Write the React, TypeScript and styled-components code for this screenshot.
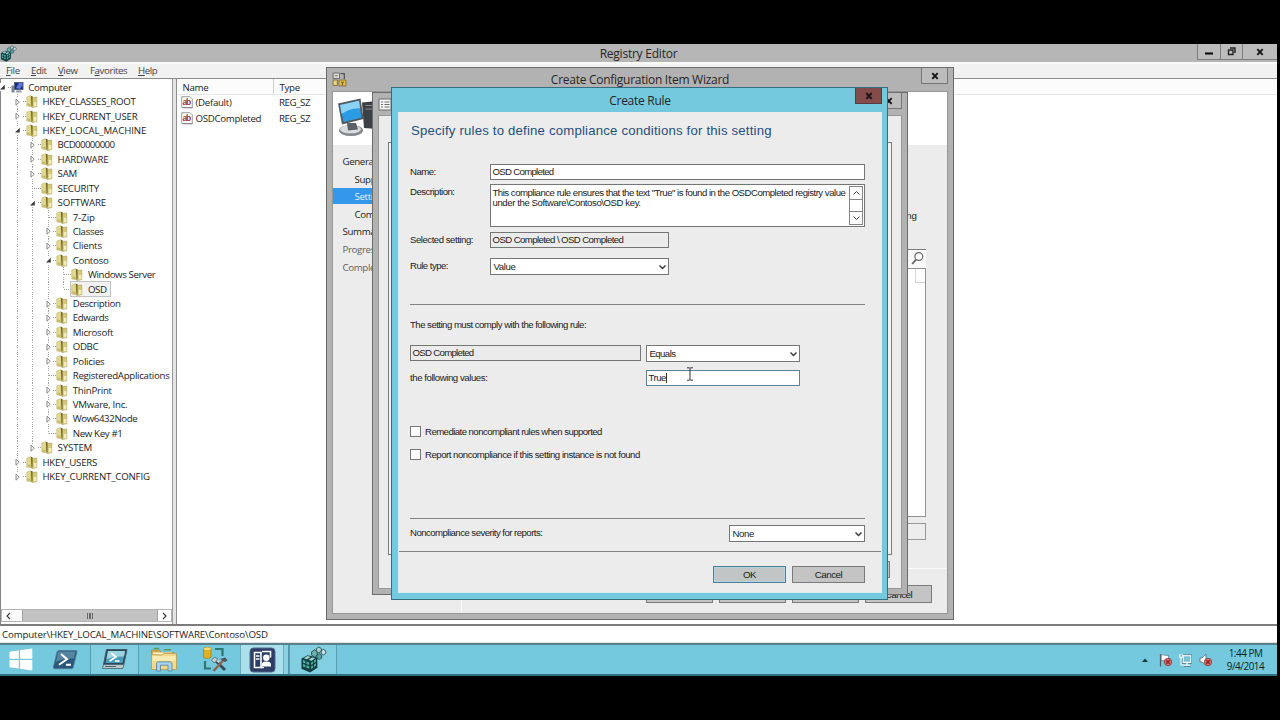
import React from "react";
import styled, { createGlobalStyle, css } from "styled-components";

const Global = createGlobalStyle`
  *, *::before, *::after { box-sizing: border-box; }
  html, body { margin: 0; padding: 0; background: #000; }
  body { font-family: "Open Sans", "Noto Sans", sans-serif; font-size: 9.7px; color: #1c1c1c; }
`;

/* ---------- shared ---------- */
const Label = styled.span<{ $ls?: number }>`
  letter-spacing: ${(p) => p.$ls ?? -0.35}px;
  white-space: nowrap;
`;

const Screen = styled.div`
  width: 1280px;
  height: 720px;
  padding: 44px 3px 44px 0;
  background: #000;
  overflow: hidden;
  position: relative;
  display: flex;
  flex-direction: column;
`;

/* ---------- registry editor ---------- */
const Editor = styled.div`
  flex: 1;
  min-height: 0;
  display: flex;
  flex-direction: column;
  background: #f1f1f1;
`;

const TitleBar = styled.div`
  height: 18px;
  display: grid;
  grid-template-columns: 80px 1fr 80px;
  align-items: center;
  background: #b6b6b6;
`;

const TitleText = styled.div`
  font-size: 12px;
  line-height: 18px;
  padding-top: 1px;
  text-align: center;
  letter-spacing: -0.23px;
  color: #262626;
`;

const WindowControls = styled.div`
  display: flex;
  align-self: start;
  height: 16px;
`;

const Control = styled.div<{ $w: number }>`
  width: ${(p) => p.$w}px;
  height: 16px;
  display: flex;
  align-items: center;
  justify-content: center;
  border: solid #7d7d7d;
  border-width: 0 0 1px 1px;
  background: #bcbcbc;
`;

const MenuBar = styled.div`
  height: 17px;
  padding: 0 0 0 6px;
  display: flex;
  border-top: 2px solid #fafafa;
  border-bottom: 1px solid #8b8b8b;
  background: #f2f2f2;
  color: #444;
`;

const MenuItem = styled.div<{ $w: number }>`
  width: ${(p) => p.$w}px;
  line-height: 14px;
  letter-spacing: -0.42px;
`;

const Mnemonic = styled.u``;

const Panes = styled.div`
  flex: 1;
  min-height: 0;
  display: flex;
  background: #e4e4e4;
`;

const TreePane = styled.div`
  width: 173px;
  border-left: 1px solid #858585;
  border-right: 1px solid #9a9a9a;
  background: #fff;
  display: flex;
  flex-direction: column;
  justify-content: space-between;
`;

const TreeList = styled.div`
  padding-top: 1px;
`;

const TreeRow = styled.div`
  height: 14.43px;
  margin-left: -6px;
  display: flex;
  align-items: center;
`;

const Guide = styled.div<{ $line?: boolean; $end?: boolean }>`
  width: 15.2px;
  height: 100%;
  flex: none;
  display: flex;
  align-items: center;
  justify-content: center;
  ${(p) =>
    p.$line &&
    css`
      background: repeating-linear-gradient(#a6a6a6 0 1px, transparent 1px 2.4px) top center / 1px ${p.$end ? "50%" : "100%"} no-repeat;
    `}
`;

const Twist = styled.svg`
  width: 7px;
  height: 8px;
  background: #fff;
`;

const Elbow = styled.div<{ $w: number }>`
  width: ${(p) => p.$w}px;
  margin-left: ${(p) => 0.5 - p.$w}px;
  flex: none;
  border-top: 1px dotted #999;
`;

const Node = styled.div<{ $sel?: boolean }>`
  height: 14px;
  display: flex;
  align-items: center;
  gap: 4.5px;
  padding-right: 3px;
  ${(p) => p.$sel && "box-shadow: 0 0 0 1px #c2c2c2; background: #f2f2f2;"}
`;

const HScroll = styled.div`
  height: 13px;
  margin: 0 0 2px 0;
  display: flex;
  border: 1px solid #b5b5b5;
  background: #fafafa;
`;

const ScrollEnd = styled.div`
  width: 13px;
  display: flex;
  align-items: center;
  justify-content: center;
  background: #fff;
`;

const ScrollThumb = styled.div`
  flex: 1;
  margin-left: 7px;
  border: solid #a2a2a2;
  border-width: 0 1px;
  background: #c3c3c3;
  display: flex;
  align-items: center;
  justify-content: center;
  gap: 1px;
`;

const Grip = styled.i`
  width: 1.4px;
  height: 6px;
  background: #666;
`;

const ListPane = styled.div`
  flex: 1;
  margin-left: 3px;
  border-left: 1px solid #8f8f8f;
  background: #fff;
`;

const ListHead = styled.div`
  height: 16px;
  display: flex;
  border-bottom: 1px solid #e6e6e6;
  background: #fcfcfc;
`;

const HeadCell = styled.div<{ $w?: number }>`
  ${(p) => (p.$w ? `width: ${p.$w}px; border-right: 1px solid #cfcfcf;` : "flex: 1;")}
  padding-left: 5.5px;
  line-height: 18px;
  letter-spacing: -0.3px;
`;

const ListRow = styled.div`
  height: 15.4px;
  padding-left: 4px;
  display: flex;
  align-items: center;
  gap: 2.5px;
`;

const NameCell = styled.div`
  width: 81px;
  height: 15px;
  line-height: 15px;
`;

const StatusBar = styled.div`
  height: 19px;
  padding-left: 2px;
  border-top: 2px solid #7c7c7c;
  border-bottom: 1px solid #e0e0e0;
  background: #fff;
  line-height: 17px;
`;

/* ---------- taskbar ---------- */
const Taskbar = styled.div`
  height: 33px;
  display: flex;
  align-items: stretch;
  border-top: 2px solid #57808a;
  border-bottom: 2px solid #306f80;
  background: #75c9de;
`;

const TaskButton = styled.div<{ $w: number; $tone?: "open" | "active" }>`
  width: ${(p) => p.$w}px;
  display: flex;
  align-items: center;
  justify-content: center;
  ${(p) => p.$tone === "open" && "background: #82cfe1; border: solid #5a9fb1; border-width: 0 1px;"}
  ${(p) => p.$tone === "active" && "background: #aadfec; border: solid #6bacbd; border-width: 0 1px;"}
`;

const GroupEdge = styled.div`
  width: 5px;
  border-right: 1px solid #4e97aa;
  background: #8bd2e3;
`;

const Tray = styled.div`
  margin-left: auto;
  padding-right: 12px;
  display: flex;
  align-items: center;
`;

const TrayIcons = styled.div`
  display: flex;
  align-items: center;
  gap: 7px;
  margin-right: 14.5px;
`;

const TrayArrow = styled.svg`
  margin-right: 3px;
`;

const Clock = styled.div`
  width: 39px;
  text-align: center;
  line-height: 13px;
  letter-spacing: -0.46px;
  color: #0c1d23;
  font-size: 9.9px;
`;

/* ---------- windows ---------- */
const Window = styled.div<{ $x: number; $y: number; $w: number; $h: number; $active?: boolean }>`
  position: absolute;
  left: ${(p) => p.$x}px;
  top: ${(p) => p.$y}px;
  width: ${(p) => p.$w}px;
  height: ${(p) => p.$h}px;
  padding: ${(p) => (p.$active ? "0 5px 6px 6px" : "0 5px 5px")};
  display: flex;
  flex-direction: column;
  border: 1px solid ${(p) => (p.$active ? "#32707f" : "#6c6c6c")};
  background: ${(p) => (p.$active ? "#75c9de" : "#b2b2b2")};
`;

const WindowTitle = styled.div<{ $h: number }>`
  height: ${(p) => p.$h}px;
  display: grid;
  grid-template-columns: 30px 1fr 30px;
  align-items: center;
  flex: none;
  font-size: 12px;
  letter-spacing: -0.27px;
  text-align: center;
  color: #262626;
`;

const CloseBox = styled.div<{ $hot?: boolean }>`
  width: 27px;
  height: 16px;
  align-self: start;
  justify-self: end;
  display: flex;
  align-items: center;
  justify-content: center;
  border: solid ${(p) => (p.$hot ? "#5b3a3c" : "#767676")};
  border-width: 0 1px 1px;
  background: ${(p) => (p.$hot ? "#834b49" : "#bcbcbc")};
`;

const Client = styled.div`
  flex: 1;
  min-height: 0;
  display: flex;
  flex-direction: column;
  overflow: hidden;
  border: 1px solid #979797;
  background: #ececec;
`;

const Banner = styled.div`
  height: 53px;
  padding: 5px 4px;
  background: #fff;
  flex: none;
`;

const WizardBody = styled.div`
  height: 423px;
  display: flex;
  justify-content: space-between;
`;

const NavList = styled.div`
  width: 128px;
  padding-top: 8px;
`;

const NavItem = styled.div<{ $sub?: boolean; $state?: "on" | "later" }>`
  height: 15.6px;
  margin-bottom: 2px;
  padding-left: ${(p) => (p.$sub ? 21.5 : 9.5)}px;
  line-height: 17px;
  letter-spacing: -0.35px;
  white-space: nowrap;
  color: ${(p) => (p.$state === "on" ? "#e4f2ff" : p.$state === "later" ? "#606060" : "#1c1c1c")};
  background: ${(p) => (p.$state === "on" ? "#3597e9" : "transparent")};
`;

const SettingsColumn = styled.div`
  width: 60px;
  margin-right: 21px;
  padding-top: 64px;
  display: flex;
  flex-direction: column;
  text-align: right;
`;

const ColumnCaption = styled.div`
  height: 14px;
  padding-right: 9px;
  font-family: "Liberation Sans", sans-serif;
  line-height: 14px;
`;

const SearchBox = styled.div`
  height: 19px;
  margin-top: 26px;
  padding: 1px 2px;
  border: solid #7a7a7a;
  border-width: 1px 0 0;
  background: #f8f8f8;
`;

const SettingsGrid = styled.div`
  height: 249px;
  border: 1px solid #929292;
  background: #fff;
  &::before {
    content: "";
    display: block;
    height: 14px;
    margin-left: 48px;
    border-left: 1px solid #d6d6d6;
    border-bottom: 1px solid #d0d0d0;
  }
`;

const ColumnField = styled.div`
  height: 17px;
  margin-top: 6px;
  border: 1px solid #979797;
  background: #ededed;
`;

const WizardFooter = styled.div`
  flex: 1;
  margin-left: 128px;
  padding: 16px 15px 0 0;
  display: flex;
  justify-content: flex-end;
  gap: 6px;
  border: solid #fafafa;
  border-width: 1px 0 0 1px;
`;

const PushButton = styled.div<{ $w: number; $primary?: boolean }>`
  width: ${(p) => p.$w}px;
  height: 17px;
  display: flex;
  align-items: center;
  justify-content: center;
  border: 1px solid ${(p) => (p.$primary ? "#4d7f94" : "#7a7a7a")};
  background: ${(p) => (p.$primary ? "#c2c5c6" : "#c4c4c4")};
  ${(p) => p.$primary && "box-shadow: inset 0 0 0 1px #b3d5de;"}
  font-family: "Liberation Sans", sans-serif;
  font-size: 9.8px;
  letter-spacing: -0.5px;
  color: #1a1a1a;
`;

const WizardButton = styled(PushButton)`
  height: 18px;
`;

const TabSheet = styled.div`
  flex: 1;
  margin: 26px 9px 0;
  border: 1px solid #7f7b74;
  background: #f3f3f3;
`;

const SheetFooter = styled.div`
  height: 33px;
  padding: 6px 11px 0;
  display: flex;
  justify-content: flex-end;
`;

/* ---------- create rule dialog ---------- */
const Form = styled(Client)`
  border-color: #d9eef2;
  border-top: 0;
  font-family: "Liberation Sans", sans-serif;
  font-size: 9.6px;
  color: #1a1a1a;
`;

const FormArea = styled.div`
  padding: 0 16px 0 11px;
  display: flex;
  flex-direction: column;
`;

const Heading = styled.div`
  height: 35px;
  padding-left: 1px;
  line-height: 37px;
  font-size: 13.2px;
  letter-spacing: 0.19px;
  white-space: nowrap;
  color: #254f7c;
`;

const FormRow = styled.div<{ $top: number; $h?: number }>`
  height: ${(p) => p.$h ?? 16}px;
  margin-top: ${(p) => p.$top}px;
  display: grid;
  grid-template-columns: 80px 1fr;
  line-height: 16px;
`;

const RuleRow = styled(FormRow)`
  grid-template-columns: 231px 154px;
  column-gap: 5px;
`;

const SeverityRow = styled(FormRow)`
  grid-template-columns: 1fr 136px;
`;

const Input = styled.div<{ $w?: number; $off?: boolean; $focus?: boolean }>`
  ${(p) => p.$w && `width: ${p.$w}px;`}
  height: 16px;
  padding-left: 1.5px;
  line-height: 14.5px;
  display: flex;
  border: 1px solid ${(p) => (p.$focus ? "#5e8196" : "#767676")};
  background: ${(p) => (p.$off ? "#ebebeb" : "#fff")};
`;

const Caret = styled.i`
  width: 1px;
  height: 10px;
  margin: 2px 0 0 0.5px;
  background: #333;
`;

const Select = styled.div<{ $w?: number }>`
  ${(p) => p.$w && `width: ${p.$w}px;`}
  height: 17px;
  padding: 0 1px 0 2.5px;
  display: flex;
  align-items: center;
  justify-content: space-between;
  border: 1px solid #767676;
  background: #fff;
`;

const TextArea = styled.div`
  height: 43px;
  padding: 2px 0 0 1.5px;
  display: flex;
  justify-content: space-between;
  line-height: 10.4px;
  border: 1px solid #767676;
  background: #fff;
`;

const Lines = styled.div`
  padding-top: 1px;
  display: flex;
  flex-direction: column;
`;

const VScroll = styled.div`
  width: 14px;
  height: 39px;
  margin: -1px 1px 0 0;
  display: grid;
  grid-template-rows: 13px 1fr 13px;
  border: 1px solid #868686;
`;

const Step = styled.div`
  display: flex;
  align-items: center;
  justify-content: center;
  &:first-child { border-bottom: 1px solid #868686; }
  &:last-child { border-top: 1px solid #868686; }
`;

const Rule = styled.div<{ $top: number }>`
  height: 1px;
  margin-top: ${(p) => p.$top}px;
  flex: none;
  background: #838383;
`;

const Sentence = styled.div`
  height: 14px;
  margin-top: 13px;
  line-height: 14px;
`;

const CheckRow = styled.div<{ $top: number }>`
  height: 11px;
  margin-top: ${(p) => p.$top}px;
  display: flex;
  align-items: center;
  gap: 4px;
`;

const Box = styled.i`
  width: 11px;
  height: 11px;
  border: 1px solid #767676;
  background: #fff;
`;

const Actions = styled.div`
  padding: 14px 16px 0 0;
  display: flex;
  justify-content: flex-end;
  gap: 6px;
`;

const Pointer = styled.svg`
  position: absolute;
  left: 686px;
  top: 367px;
`;

/* ---------- icons ---------- */
const Folder = () => (
  <svg width="12" height="13" viewBox="0 0 12 13">
    <path d="M.8 2.200 5 .6v11L.8 11z" fill="#e3d98f" stroke="#bdb26d" strokeWidth=".6" />
    <path d="M6 2.600 10.800 2v9.600L6 12.600z" fill="#d3c977" stroke="#a99d55" strokeWidth=".6" />
    <path d="M5 1h1.500v9.200L5.500 12.400z" fill="#6f6526" />
    <path d="M1.400 8.500 4.400 9v2L1.400 10.500z" fill="#c4b864" />
    <path d="M7.800 7h2.600v4l-2.600.6z" fill="#f2ecbd" />
  </svg>
);

const Pc = () => (
  <svg width="13" height="13" viewBox="0 0 13 13">
    <path d="M.5 4.500h3v7h-3z" fill="#7b8794" />
    <path d="M3 1h9.500v8H3z" fill="#56637f" />
    <path d="M4 2h7.500v6H4z" fill="#1c2c8c" />
    <path d="m5 7 3-5h3.500v2L9 8z" fill="#5f79d4" />
    <path d="M5.500 9.300h4.200l1.300 2.200H4.600z" fill="#98a1ab" />
  </svg>
);

const Arrow = ({ open }: { open?: boolean }) => (
  <Twist viewBox="0 0 7 8">
    {open ? (
      <path d="M5.800 1.800v4.700H1z" fill="#3b3b3b" />
    ) : (
      <path d="M2 1.200 5.200 4.200 2 7.200z" fill="#fff" stroke="#7c7c7c" strokeWidth=".9" />
    )}
  </Twist>
);

const StringIcon = () => (
  <svg width="12" height="13" viewBox="0 0 12 13">
    <path d="M.7.700h8.400l2.200 2.200v8.600H.7z" fill="#fff" stroke="#9d9d9d" />
    <path d="M2 11.800h9.600" stroke="#777" strokeWidth=".8" />
    <text x="1.400" y="8.800" fontFamily="Liberation Sans" fontWeight="bold" fontSize="8.500" fill="#96382f" textLength="8.800">ab</text>
  </svg>
);

const Cross = ({ s = 8 }: { s?: number }) => (
  <svg width={s} height={s} viewBox="0 0 8 8">
    <path d="M1.300 1.200 6.700 6.800M6.700 1.200 1.300 6.800" stroke="#141414" strokeWidth="1.900" />
  </svg>
);

const Chevron = ({ d = "M1.500 2.500 4.500 5.500 7.500 2.500", w = 1.5 }: { d?: string; w?: number }) => (
  <svg width="9" height="8" viewBox="0 0 9 8">
    <path d={d} fill="none" stroke="#3c3c3c" strokeWidth={w} />
  </svg>
);

const Cubes = ({ size }: { size: number }) => (
  <svg width={size} height={size} viewBox="0 0 28 28">
    <path d="M1.500 13 8 9.500l10 2.500v10.500L10.500 27.500 1.500 23.500z" fill="#123f44" />
    <g fill="#4fae9f">
      <path d="M3 14.500l2.600 1v2.600l-2.600-1zM6.700 16l2.800 1v2.600l-2.800-1zM3 18.600l2.600 1v2.600l-2.600-1zM6.700 20l2.800 1v2.600l-2.800-1z" />
      <path d="M11.500 17l2-1.300v2.600l-2 1.300zM14.500 15l2-1.300v2.600l-2 1.300zM11.500 21.200l2-1.300v2.600l-2 1.300zM14.500 19.200l2-1.300v2.600l-2 1.300z" />
    </g>
    <path d="M4 12.600 8 10.400l3 1-4 2.400zM9 14.300l3.600-2.400 3.200.9-4 2.400z" fill="#a6dcd3" />
    <g stroke="#173c42" strokeWidth=".8">
      <path d="m12 6 3-2 3 2v3.400l-3 2-3-2z" fill="#6fb0ae" />
      <path d="m17 2.600 2.500-1.600 2.600 1.600v3L19.500 7 17 5.600z" fill="#a9cfcf" />
      <path d="m22 5 2.300-1.500L26.600 5v2.800L24.300 9.200 22 7.800z" fill="#c9e2e2" />
      <path d="m17.500 9.500 2.500-1.500 2.500 1.500v3l-2.500 1.500-2.500-1.500z" fill="#5ba3a2" />
    </g>
  </svg>
);

const Start = () => (
  <svg width="24" height="23" viewBox="0 0 24 23">
    <path d="M.5 3.700 9.800 2.400v8.400H.5zM11 2.200 23.300.5v10.300H11zM.5 12H9.800v8.400L.5 19.200zM11 12h12.300v10.400L11 20.700z" fill="#fff" />
  </svg>
);

const PowerShell = () => (
  <svg width="25" height="21" viewBox="0 0 25 21">
    <path d="M5.500 1.500h17.200c1 0 1.500.7 1.200 1.700l-3.600 15c-.2.900-1 1.500-2 1.500H1.600c-1 0-1.500-.7-1.200-1.600L4 3c.2-.9.800-1.500 1.500-1.500z" fill="#2b5878" stroke="#4f7d99" strokeWidth=".8" />
    <path d="M5 2.500h17.500l-1.600 7C15 9 9 10 3 13z" fill="#5685a2" />
    <path d="m8 5 6 5.200-8 5.600M13 15.800h5" fill="none" stroke="#fff" strokeWidth="2" />
  </svg>
);

const Ise = () => (
  <svg width="28" height="24" viewBox="0 0 28 24">
    <path d="M5.500 1.500h20.500l-3.200 15H2.500z" fill="#2c4859" stroke="#3d5d6b" />
    <path d="M7 3h17l-2.400 12H4.500z" fill="#4b9cb8" />
    <path d="M7 3h17l-1 5.500C16 8 10 9.500 5.500 11z" fill="#9ed3e0" />
    <path d="m10 5 5 4-6.500 4M14 13h4.500" fill="none" stroke="#fff" strokeWidth="1.700" />
    <path d="M2.500 16.500h20.400l-1 4H1.500z" fill="#b9c8cb" stroke="#43606c" strokeWidth=".8" />
    <path d="M4 18.500h11" stroke="#48616b" />
  </svg>
);

const Explorer = () => (
  <svg width="28" height="25" viewBox="0 0 28 25">
    <path d="M1.500 3h8l1.500 2.500h13V9H1.500z" fill="#d8a94f" stroke="#a88638" strokeWidth=".7" />
    <path d="M4 1.500h5M14 2.800h7" stroke="#5a9a5a" strokeWidth="1.600" />
    <path d="M3 5.500h19v4H3z" fill="#fff4c6" />
    <path d="M1.500 7.500 12 8l1.500-1.500H26.500V22.500H1.500z" fill="#f0d98a" stroke="#b79b4d" strokeWidth=".8" />
    <path d="M2.500 9h23v5h-23z" fill="#f9ecb0" />
    <path d="M6.500 24v-7.200c0-1.300.8-2 2-2h11.500c1.200 0 2 .7 2 2V24h-4v-5.800h-7.500V24z" fill="#a5d4ea" stroke="#54809a" strokeWidth=".8" />
  </svg>
);

const Tools = () => (
  <svg width="28" height="27" viewBox="0 0 28 27">
    <path d="M2.500 2.500c0-1.700 7.500-1.700 7.500 0v8.500c0 1.700-7.500 1.700-7.500 0z" fill="#e0b123" stroke="#9c7a14" strokeWidth=".7" />
    <ellipse cx="6.200" cy="2.700" rx="3.600" ry="1.200" fill="#f6dd7a" />
    <path d="M14 3h7.500v7M4 15v7.500h6" fill="none" stroke="#2c7771" strokeWidth="2.200" />
    <path d="m13 13 11 11" stroke="#384a54" strokeWidth="2.800" />
    <path d="m14 12.500 4 4" stroke="#dfe8eb" strokeWidth="1.500" />
    <path d="M24 12.500 12.500 25" stroke="#8d6650" strokeWidth="2.400" />
    <path d="m19 13 5.500-1.500 2 3-2.500 1.500z" fill="#4b575c" />
    <path d="m10.500 14 3-2.500 3 1-1 3-3 1z" fill="#c6d0d4" stroke="#4b5a62" strokeWidth=".7" />
  </svg>
);

const ConfigMgr = () => (
  <svg width="27" height="26" viewBox="0 0 27 26">
    <rect x="1" y="1" width="25" height="24" rx="3.500" fill="#2d3d64" stroke="#54688f" />
    <path d="M5.500 5.500h6.500v15H5.500z" fill="none" stroke="#fff" strokeWidth="1.600" />
    <path d="M7 9h3.500M7 12h3.500" stroke="#fff" strokeWidth="1.300" />
    <path d="M13 4.500h8.500v6M12 20.500h3" fill="none" stroke="#fff" strokeWidth="1.600" />
    <circle cx="17.300" cy="10.800" r="3.200" fill="#fff" />
    <path d="M12.800 19.500v-2c0-2 1.500-3 4.500-3s4.700 1 4.700 3v2z" fill="#fff" />
  </svg>
);

const RedMark = () => (
  <g>
    <circle cx="9" cy="9" r="3.700" fill="#d8706c" stroke="#7d2b2f" strokeWidth=".7" />
    <path d="m7.300 7.300 3.400 3.400M10.700 7.300 7.300 10.700" stroke="#8c2424" strokeWidth="1.300" />
  </g>
);

const FlagIcon = () => (
  <svg width="13" height="14" viewBox="0 0 13 14">
    <path d="M1.500 1v12.500" stroke="#4c6067" strokeWidth="1.300" />
    <path d="M2.200 2c2.500-.8 3.500 1 7.300.3V8c-3 .6-4.500-1-7.300-.2z" fill="#fff" stroke="#5f7f88" strokeWidth=".8" />
    <RedMark />
  </svg>
);

const NetIcon = () => (
  <svg width="13" height="14" viewBox="0 0 13 14">
    <path d="M4 2.500h8v7H4z" fill="#79bfd2" stroke="#fff" strokeWidth="1.300" />
    <path d="M3.200 1.700h9.600v8.700H3.200z" fill="none" stroke="#41616b" strokeWidth=".7" />
    <path d="M5 12.300h6M8 10v2" stroke="#fff" strokeWidth="1.300" />
    <path d="M5 13.300h6.500" stroke="#41616b" strokeWidth=".7" />
    <path d="M.7 1v3.500h2.600V1M2 4.500v7.500h3" fill="none" stroke="#e9f5f0" strokeWidth="1.200" />
  </svg>
);

const SpeakerIcon = () => (
  <svg width="13" height="14" viewBox="0 0 13 14">
    <path d="M1 5h2l4-3.800v11L3 9H1z" fill="#fff" stroke="#4e6b74" strokeWidth=".8" />
    <RedMark />
  </svg>
);

const BigMonitor = () => (
  <svg width="46" height="42" viewBox="0 0 46 42">
    <path d="M25 5.500 40 4v28l-13-1z" fill="#3c4045" />
    <path d="M28.500 8.500h9M28.500 12h9" stroke="#878c91" strokeWidth="1.200" />
    <ellipse cx="14" cy="33.500" rx="12" ry="5.500" fill="#82888e" />
    <ellipse cx="13.500" cy="32.300" rx="10.500" ry="4" fill="#d9dcdf" />
    <path d="M10 26h9l2 6.500-10 1z" fill="#5b6167" />
    <path d="M1 6.500 23.500 1.500 26.500 22 5 27.500z" fill="#54595e" />
    <path d="M3 8 22 3.700l2.500 17L6.500 25z" fill="#2b9be4" />
    <path d="M3 8 22 3.700l1 7.500C15 11 9 14 4.700 17z" fill="#8bd2f6" />
  </svg>
);

const WizardIcon = () => (
  <svg width="15" height="15" viewBox="0 0 14 14">
    <path d="M1 1h6v5H1z" fill="#e6e6e6" stroke="#666" strokeWidth=".9" />
    <path d="M2.500 3.500h3" stroke="#6f6a2a" />
    <path d="M8 1.500h3.500v5" fill="none" stroke="#555" strokeWidth="1.200" />
    <path d="M6.500 7.500h6.500v5.500H6.500z" fill="#e3c145" stroke="#7a6a2a" strokeWidth=".8" />
    <path d="M1 7.500h4v5H1z" fill="#e9d58a" stroke="#7a6a2a" strokeWidth=".8" />
    <path d="M8.500 9.500h2.500M9.800 9.500v3" fill="none" stroke="#6e5a1c" />
  </svg>
);

const FormIcon = () => (
  <svg width="14" height="13" viewBox="0 0 14 13">
    <path d="M1 1h12v11H1z" fill="#f5f5f5" stroke="#6b6b6b" />
    <path d="M3 4h2M3 6.500h2M3 9h2M6.500 4h5M6.500 6.500h5M6.500 9h5" stroke="#6d6d6d" />
  </svg>
);

const Magnifier = () => (
  <svg width="13" height="15" viewBox="0 0 13 14">
    <circle cx="7.800" cy="5" r="3.900" fill="#fff" stroke="#666" strokeWidth="1.200" />
    <path d="M5 8 1.200 12.500" stroke="#666" strokeWidth="1.900" />
  </svg>
);

/* ---------- data ---------- */
type Kind = "open" | "closed" | "leaf";
type Entry = { t: string; l: number; k: Kind; ls?: number; end?: boolean; sel?: boolean };

const tree: Entry[] = [
  { t: "Computer", l: 0, k: "open", ls: -0.27 },
  { t: "HKEY_CLASSES_ROOT", l: 1, k: "closed", ls: -0.24 },
  { t: "HKEY_CURRENT_USER", l: 1, k: "closed", ls: -0.25 },
  { t: "HKEY_LOCAL_MACHINE", l: 1, k: "open", ls: -0.1 },
  { t: "BCD00000000", l: 2, k: "closed", ls: -0.62 },
  { t: "HARDWARE", l: 2, k: "closed", ls: -0.24 },
  { t: "SAM", l: 2, k: "closed", ls: -0.24 },
  { t: "SECURITY", l: 2, k: "leaf", ls: -0.24 },
  { t: "SOFTWARE", l: 2, k: "open", ls: -0.14 },
  { t: "7-Zip", l: 3, k: "leaf", ls: -0.1 },
  { t: "Classes", l: 3, k: "closed" },
  { t: "Clients", l: 3, k: "closed", ls: -0.2 },
  { t: "Contoso", l: 3, k: "open", ls: -0.25 },
  { t: "Windows Server", l: 4, k: "leaf", ls: -0.38 },
  { t: "OSD", l: 4, k: "leaf", sel: true, end: true },
  { t: "Description", l: 3, k: "closed" },
  { t: "Edwards", l: 3, k: "closed", ls: -0.45 },
  { t: "Microsoft", l: 3, k: "closed", ls: -0.25 },
  { t: "ODBC", l: 3, k: "closed" },
  { t: "Policies", l: 3, k: "closed", ls: -0.25 },
  { t: "RegisteredApplications", l: 3, k: "leaf", ls: -0.29 },
  { t: "ThinPrint", l: 3, k: "closed", ls: -0.25 },
  { t: "VMware, Inc.", l: 3, k: "closed", ls: -0.25 },
  { t: "Wow6432Node", l: 3, k: "closed", ls: -0.4 },
  { t: "New Key #1", l: 3, k: "leaf", ls: -0.35, end: true },
  { t: "SYSTEM", l: 2, k: "closed", ls: -0.14, end: true },
  { t: "HKEY_USERS", l: 1, k: "closed", ls: -0.24 },
  { t: "HKEY_CURRENT_CONFIG", l: 1, k: "closed", ls: -0.2, end: true },
];

const menus: [string, string, string, number][] = [
  ["", "F", "ile", 25],
  ["", "E", "dit", 27],
  ["", "V", "iew", 32],
  ["F", "a", "vorites", 48],
  ["", "H", "elp", 40],
];
const values: [string, number][] = [["(Default)", -0.3], ["OSDCompleted", -0.31]];

function TreeItem({ e }: { e: Entry }) {
  return (
    <TreeRow>
      {Array.from({ length: e.l + 1 }, (_, i) => (
        <Guide key={i} $line={i > 0} $end={e.end && i === e.l}>
          {i === e.l && e.k !== "leaf" && <Arrow open={e.k === "open"} />}
        </Guide>
      ))}
      <Elbow $w={e.k === "leaf" ? 7 : 3} />
      <Node $sel={e.sel}>
        {e.l === 0 ? <Pc /> : <Folder />}
        <Label $ls={e.ls}>{e.t}</Label>
      </Node>
    </TreeRow>
  );
}

function RegistryEditor() {
  return (
    <Editor>
      <TitleBar>
        <Cubes size={17} />
        <TitleText>Registry Editor</TitleText>
        <WindowControls>
          <Control $w={23}>
            <svg width="8" height="8"><path d="M0 5.500h8" stroke="#111" strokeWidth="2.200" /></svg>
          </Control>
          <Control $w={22}>
            <svg width="9" height="9"><path d="M1.500 3h4.500v4.500H1.500zM3 1h5v5" fill="none" stroke="#222" strokeWidth="1.400" /></svg>
          </Control>
          <Control $w={35}><Cross /></Control>
        </WindowControls>
      </TitleBar>
      <MenuBar>
        {menus.map(([a, u, b, w]) => (
          <MenuItem key={b} $w={w}>{a}<Mnemonic>{u}</Mnemonic>{b}</MenuItem>
        ))}
      </MenuBar>
      <Panes>
        <TreePane>
          <TreeList>{tree.map((e) => <TreeItem key={e.t} e={e} />)}</TreeList>
          <HScroll>
            <ScrollEnd><Chevron d="M6 1 3 4 6 7" w={1.2} /></ScrollEnd>
            <ScrollThumb><Grip /><Grip /><Grip /></ScrollThumb>
            <ScrollEnd><Chevron d="M3 1 6 4 3 7" w={1.2} /></ScrollEnd>
          </HScroll>
        </TreePane>
        <ListPane>
          <ListHead>
            <HeadCell $w={97}>Name</HeadCell>
            <HeadCell>Type</HeadCell>
          </ListHead>
          {values.map(([t, ls]) => (
            <ListRow key={t}>
              <StringIcon />
              <NameCell><Label $ls={ls}>{t}</Label></NameCell>
              <Label $ls={-0.4}>REG_SZ</Label>
            </ListRow>
          ))}
        </ListPane>
      </Panes>
      <StatusBar>
        <Label $ls={-0.14}>{"Computer\\HKEY_LOCAL_MACHINE\\SOFTWARE\\Contoso\\OSD"}</Label>
      </StatusBar>
    </Editor>
  );
}

function WizardWindow() {
  return (
    <Window $x={326} $y={67} $w={628} $h={553}>
      <WindowTitle $h={23}>
        <WizardIcon />
        <span>Create Configuration Item Wizard</span>
        <CloseBox><Cross /></CloseBox>
      </WindowTitle>
      <Client>
        <Banner><BigMonitor /></Banner>
        <WizardBody>
          <NavList>
            <NavItem>General</NavItem>
            <NavItem $sub>Supported</NavItem>
            <NavItem $sub $state="on">Settings</NavItem>
            <NavItem $sub>Compliance</NavItem>
            <NavItem>Summary</NavItem>
            <NavItem $state="later">Progress</NavItem>
            <NavItem $state="later">Completion</NavItem>
          </NavList>
          <SettingsColumn>
            <ColumnCaption>ng</ColumnCaption>
            <SearchBox><Magnifier /></SearchBox>
            <SettingsGrid />
            <ColumnField />
          </SettingsColumn>
        </WizardBody>
        <WizardFooter>
          <WizardButton $w={67} />
          <WizardButton $w={67} />
          <WizardButton $w={67} />
          <WizardButton $w={67}>Cancel</WizardButton>
        </WizardFooter>
      </Client>
    </Window>
  );
}

function SettingWindow() {
  return (
    <Window $x={372} $y={92} $w={536} $h={503}>
      <WindowTitle $h={22}>
        <FormIcon />
        <span />
        <CloseBox><Cross /></CloseBox>
      </WindowTitle>
      <Client>
        <TabSheet />
        <SheetFooter><PushButton $w={60} /></SheetFooter>
      </Client>
    </Window>
  );
}

function CreateRule() {
  return (
    <Window $x={391} $y={87} $w={497} $h={513} $active>
      <WindowTitle $h={24}>
        <span />
        <span>Create Rule</span>
        <CloseBox $hot><Cross /></CloseBox>
      </WindowTitle>
      <Form>
        <FormArea>
          <Heading>Specify rules to define compliance conditions for this setting</Heading>
          <FormRow $top={17}>
            <Label $ls={-0.5}>Name:</Label>
            <Input><Label $ls={-0.68}>OSD Completed</Label></Input>
          </FormRow>
          <FormRow $top={4} $h={43}>
            <Label $ls={-0.52}>Description:</Label>
            <TextArea>
              <Lines>
                <Label $ls={-0.49}>This compliance rule ensures that the text "True" is found in the OSDCompleted registry value</Label>
                <Label $ls={-0.41}>{"under the Software\\Contoso\\OSD key."}</Label>
              </Lines>
              <VScroll>
                <Step><Chevron d="M1.500 5.500 4.500 2.500 7.500 5.500" w={1} /></Step>
                <div />
                <Step><Chevron w={1} /></Step>
              </VScroll>
            </TextArea>
          </FormRow>
          <FormRow $top={5}>
            <Label $ls={-0.47}>Selected setting:</Label>
            <Input $w={179} $off><Label $ls={-0.58}>{"OSD Completed \\ OSD Completed"}</Label></Input>
          </FormRow>
          <FormRow $top={10} $h={17}>
            <Label $ls={-0.52}>Rule type:</Label>
            <Select $w={179}><Label $ls={-0.4}>Value</Label><Chevron /></Select>
          </FormRow>
          <Rule $top={29} />
          <Sentence><Label $ls={-0.52}>The setting must comply with the following rule:</Label></Sentence>
          <RuleRow $top={13}>
            <Input $off><Label $ls={-0.68}>OSD Completed</Label></Input>
            <Select><Label $ls={-0.57}>Equals</Label><Chevron /></Select>
          </RuleRow>
          <RuleRow $top={9}>
            <Label $ls={-0.43}>the following values:</Label>
            <Input $focus><Label $ls={-0.5}>True</Label><Caret /></Input>
          </RuleRow>
          <CheckRow $top={40}><Box /><Label $ls={-0.55}>Remediate noncompliant rules when supported</Label></CheckRow>
          <CheckRow $top={12}><Box /><Label $ls={-0.48}>Report noncompliance if this setting instance is not found</Label></CheckRow>
          <Rule $top={58} />
          <SeverityRow $top={6} $h={17}>
            <Label $ls={-0.53}>Noncompliance severity for reports:</Label>
            <Select><Label $ls={-0.4}>None</Label><Chevron /></Select>
          </SeverityRow>
        </FormArea>
        <Rule $top={9} />
        <Actions>
          <PushButton $w={73} $primary>OK</PushButton>
          <PushButton $w={73}>Cancel</PushButton>
        </Actions>
      </Form>
    </Window>
  );
}

export default function App() {
  return (
    <Screen>
      <Global />
      <RegistryEditor />
      <Taskbar>
        <TaskButton $w={41}><Start /></TaskButton>
        <TaskButton $w={49}><PowerShell /></TaskButton>
        <TaskButton $w={49} $tone="open"><Ise /></TaskButton>
        <TaskButton $w={50}><Explorer /></TaskButton>
        <TaskButton $w={51}><Tools /></TaskButton>
        <TaskButton $w={44} $tone="active"><ConfigMgr /></TaskButton>
        <GroupEdge />
        <TaskButton $w={48} $tone="open"><Cubes size={27} /></TaskButton>
        <Tray>
          <TrayIcons>
            <TrayArrow width="8" height="6"><path d="M1 5 4 1.500 7 5z" fill="#173943" /></TrayArrow>
            <FlagIcon />
            <NetIcon />
            <SpeakerIcon />
          </TrayIcons>
          <Clock>1:44 PM<br />9/4/2014</Clock>
        </Tray>
      </Taskbar>
      <WizardWindow />
      <SettingWindow />
      <CreateRule />
      <Pointer width="8" height="14" viewBox="0 0 8 14">
        <path d="M1 .8h2.200L4 1.500 4.800.8H7M4 1.500v11M1 13.200h2.200l.8-.7.8.7H7" fill="none" stroke="#333" strokeWidth="1" />
      </Pointer>
    </Screen>
  );
}
